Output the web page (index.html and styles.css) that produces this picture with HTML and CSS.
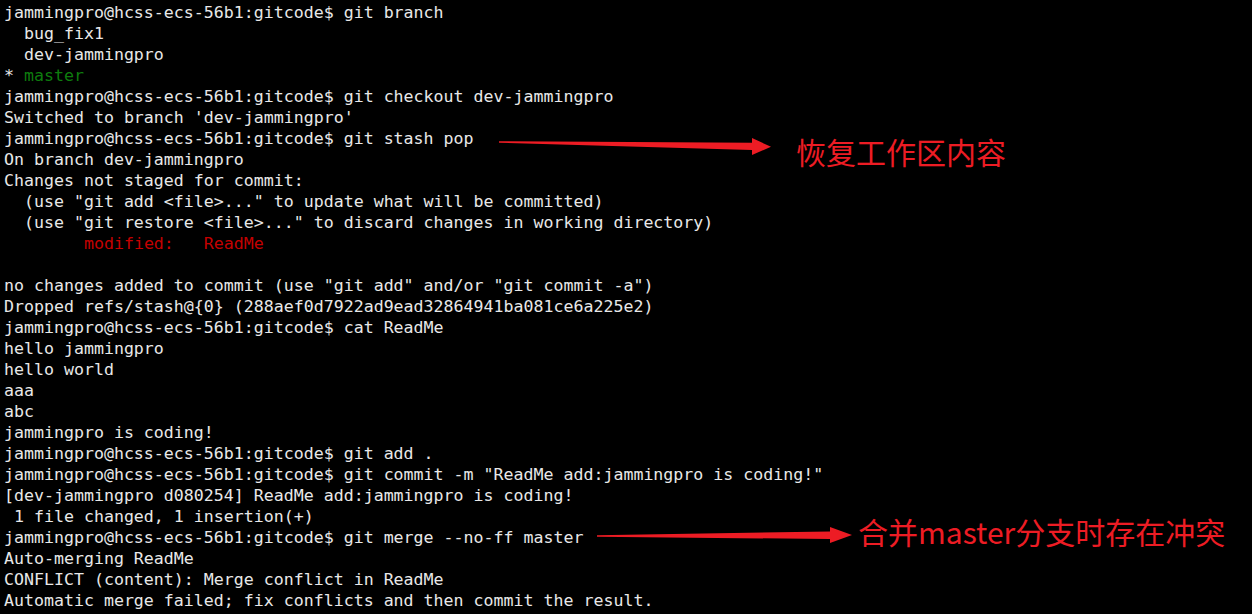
FILE: index.html
```html
<!DOCTYPE html>
<html>
<head>
<meta charset="utf-8">
<link rel="stylesheet" href="styles.css">
</head>
<body>
<div class="term">
<pre class="out">jammingpro@hcss-ecs-56b1:gitcode$ git branch
  bug_fix1
  dev-jammingpro
* <span class="green">master</span>
jammingpro@hcss-ecs-56b1:gitcode$ git checkout dev-jammingpro
Switched to branch 'dev-jammingpro'
jammingpro@hcss-ecs-56b1:gitcode$ git stash pop
On branch dev-jammingpro
Changes not staged for commit:
  (use "git add &lt;file&gt;..." to update what will be committed)
  (use "git restore &lt;file&gt;..." to discard changes in working directory)
        <span class="red">modified:   ReadMe</span>

no changes added to commit (use "git add" and/or "git commit -a")
Dropped refs/stash@{0} (288aef0d7922ad9ead32864941ba081ce6a225e2)
jammingpro@hcss-ecs-56b1:gitcode$ cat ReadMe
hello jammingpro
hello world
aaa
abc
jammingpro is coding!
jammingpro@hcss-ecs-56b1:gitcode$ git add .
jammingpro@hcss-ecs-56b1:gitcode$ git commit -m "ReadMe add:jammingpro is coding!"
[dev-jammingpro d080254] ReadMe add:jammingpro is coding!
 1 file changed, 1 insertion(+)
jammingpro@hcss-ecs-56b1:gitcode$ git merge --no-ff master
Auto-merging ReadMe
CONFLICT (content): Merge conflict in ReadMe
Automatic merge failed; fix conflicts and then commit the result.</pre>
<svg class="arrows" width="1252" height="614" viewBox="0 0 1252 614">
  <polygon fill="#ed1c24" points="499,141.3 752,142.8 752,138 771,146.8 752,155 752,150 499,142.8"/>
  <polygon fill="#ed1c24" points="597,535.3 830,531.5 830,527 852,535 830,543 830,539 597,536.8"/>
</svg>
<div class="note note-1">恢复工作区内容</div>
<div class="note note-2">合并master分支时存在冲突</div>
</div>
</body>
</html>
```

FILE: styles.css
```css
html, body {
  margin: 0;
  padding: 0;
  background: #000;
}
.term {
  position: relative;
  width: 1252px;
  height: 614px;
  overflow: hidden;
  background: #000;
}
.out {
  margin: 0;
  padding: 2px 0 0 4px;
  font-family: "DejaVu Sans Mono", monospace;
  font-size: 16.6px;
  line-height: 21px;
  color: #e8e8e8;
}
.green { color: #0e7c0e; }
.red { color: #c40000; }
.arrows {
  position: absolute;
  left: 0;
  top: 0;
}
.note {
  position: absolute;
  font-family: "Noto Sans CJK SC", sans-serif;
  font-size: 30px;
  line-height: 30px;
  color: #ed1c24;
  white-space: nowrap;
}
.note-1 { left: 796px; top: 136px; }
.note-2 { left: 858px; top: 516px; }
```
